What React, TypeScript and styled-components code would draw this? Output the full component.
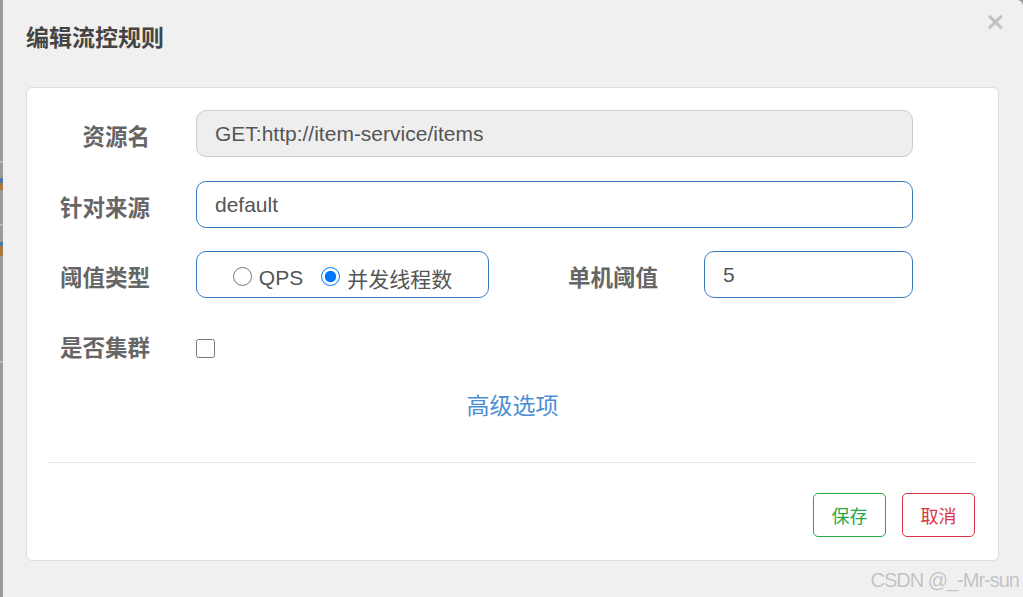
import * as React from 'react';
import styled, { createGlobalStyle } from 'styled-components';

const FONT = `"Liberation Sans", "Noto Sans CJK SC", sans-serif`;

const GlobalStyle = createGlobalStyle`
  html, body {
    margin: 0;
    padding: 0;
    overflow: hidden;
  }
  body {
    font-family: ${FONT};
    background: #999999;
  }
`;

export default function App() {
  return (
    <>
      <GlobalStyle />
      <Page>
        <BackdropStrip />
        <Dialog>
          <Header>
            <Title>编辑流控规则</Title>
            <CloseButton type="button">×</CloseButton>
          </Header>
          <Panel>
            <Row>
              <Label>资源名</Label>
              <TextInput $wide $readonly readOnly value="GET:http://item-service/items" />
            </Row>
            <Row $gap={24}>
              <Label>针对来源</Label>
              <TextInput $wide readOnly value="default" />
            </Row>
            <Row $gap={23}>
              <Label>阈值类型</Label>
              <RadioGroup>
                <RadioItem>
                  <Radio type="radio" name="grade" readOnly />
                  QPS
                </RadioItem>
                <RadioItem>
                  <Radio type="radio" name="grade" checked readOnly />
                  并发线程数
                </RadioItem>
              </RadioGroup>
              <Label $width={169}>单机阈值</Label>
              <TextInput readOnly value="5" />
            </Row>
            <Row $gap={23}>
              <Label>是否集群</Label>
              <Checkbox type="checkbox" readOnly />
            </Row>
            <AdvancedLink>高级选项</AdvancedLink>
            <Divider />
            <Footer>
              <ActionButton $color="#28a745">保存</ActionButton>
              <ActionButton $color="#dc3545">取消</ActionButton>
            </Footer>
          </Panel>
        </Dialog>
        <Watermark>CSDN @_-Mr-sun</Watermark>
      </Page>
    </>
  );
}

const Page = styled.div`
  position: relative;
  display: flex;
  width: 1023px;
  height: 597px;
  background: #999999;
`;

const BackdropStrip = styled.div`
  width: 3px;
  flex-shrink: 0;
  background:
    linear-gradient(#9a9a9a 0 161px, #b8b8b8 161px 163px, #9a9a9a 163px 178px,
      #4a78a8 178px 183px, #a9783a 183px 190px, #9a9a9a 190px 224px,
      #b8b8b8 224px 226px, #9a9a9a 226px 242px, #4a78a8 242px 246px,
      #a9783a 246px 256px, #9a9a9a 256px 361px, #b8b8b8 361px 363px,
      #9a9a9a 363px);
`;

const Dialog = styled.div`
  flex: 1;
  display: flex;
  flex-direction: column;
  background: #f0f0f0;
  border-top-right-radius: 6px;
`;

const Header = styled.div`
  display: flex;
  justify-content: space-between;
  align-items: flex-start;
  height: 87px;
  padding: 0 19px 0 23px;
  box-sizing: border-box;
`;

const Title = styled.h4`
  margin: 23px 0 0 0;
  font-size: 23px;
  line-height: 31px;
  font-weight: bold;
  color: #444444;
`;

const CloseButton = styled.button`
  margin-top: 7px;
  padding: 0;
  border: 0;
  background: transparent;
  font-family: ${FONT};
  font-size: 30px;
  line-height: 30px;
  font-weight: bold;
  color: rgba(0, 0, 0, 0.2);
  cursor: pointer;
`;

const Panel = styled.div`
  display: flex;
  flex-direction: column;
  margin: 0 24px 36px 23px;
  padding: 22px 23px 23px 0;
  background: #ffffff;
  border: 1px solid #dddddd;
  border-radius: 6px;
  height: 474px;
  box-sizing: border-box;
`;

const Row = styled.div<{ $gap?: number }>`
  display: flex;
  align-items: flex-start;
  height: 47px;
  margin-top: ${(p) => p.$gap ?? 0}px;
`;

const Label = styled.label<{ $width?: number }>`
  width: ${(p) => p.$width ?? 123}px;
  flex-shrink: 0;
  margin-right: 46px;
  padding-top: 12px;
  text-align: right;
  font-size: 22.5px;
  line-height: 31px;
  font-weight: bold;
  color: #666666;
`;

const TextInput = styled.input<{ $wide?: boolean; $readonly?: boolean }>`
  width: ${(p) => (p.$wide ? 717 : 209)}px;
  height: 47px;
  box-sizing: border-box;
  padding: 0 18px;
  border: 1px solid ${(p) => (p.$readonly ? '#cccccc' : '#3a7bbf')};
  border-radius: 10px;
  background: ${(p) => (p.$readonly ? '#eeeeee' : '#ffffff')};
  font-family: ${FONT};
  font-size: 21px;
  color: #555555;
  outline: none;
`;

const RadioGroup = styled.div`
  display: flex;
  justify-content: center;
  align-items: center;
  gap: 18px;
  width: 293px;
  height: 47px;
  box-sizing: border-box;
  padding-top: 6px;
  border: 1px solid #3a7bbf;
  border-radius: 10px;
`;

const RadioItem = styled.label`
  display: flex;
  align-items: center;
  gap: 7px;
  font-size: 21px;
  color: #555555;
`;

const Radio = styled.input`
  width: 19px;
  height: 19px;
  margin: 0 0 2px 0;
  accent-color: #0075ff;
`;

const Checkbox = styled.input`
  width: 19px;
  height: 19px;
  margin: 18px 0 0 0;
`;

const AdvancedLink = styled.a`
  align-self: center;
  margin: 23px 0 0 23px;
  font-size: 23px;
  line-height: 30px;
  color: #4a8fd6;
  cursor: pointer;
`;

const Divider = styled.hr`
  margin: 41px 0 0 22px;
  border: 0;
  border-top: 1px solid #e5e5e5;
`;

const Footer = styled.div`
  display: flex;
  justify-content: flex-end;
  gap: 16px;
  margin-top: 30px;
`;

const ActionButton = styled.button<{ $color: string }>`
  width: 73px;
  height: 44px;
  padding: 0;
  border: 1px solid ${(p) => p.$color};
  border-radius: 5px;
  background: #ffffff;
  font-family: ${FONT};
  font-size: 18px;
  color: ${(p) => p.$color};
  cursor: pointer;
`;

const Watermark = styled.div`
  position: absolute;
  right: 4px;
  bottom: 7px;
  font-family: ${FONT};
  font-size: 20px;
  line-height: 20px;
  letter-spacing: -1px;
  color: #c2c2c2;
  text-shadow: 0 0 1px #ffffff;
  pointer-events: none;
`;
